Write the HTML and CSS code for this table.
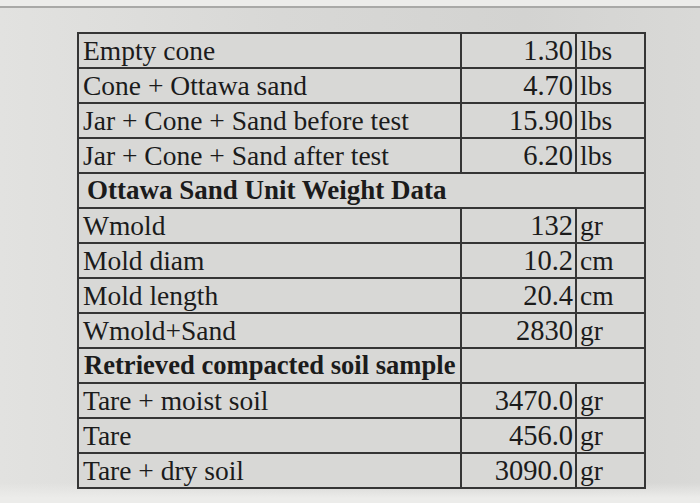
FILE: index.html
```html
<!DOCTYPE html>
<html>
<head>
<meta charset="utf-8">
<link rel="stylesheet" href="styles.css">
</head>
<body>
<div class="screen">
  <div class="topbar"></div>
  <div class="sheet">
    <table class="data">
      <colgroup>
        <col class="c-label">
        <col class="c-num">
        <col class="c-unit">
      </colgroup>
      <tr><td class="label">Empty cone</td><td class="num">1.30</td><td class="unit">lbs</td></tr>
      <tr><td class="label">Cone + Ottawa sand</td><td class="num">4.70</td><td class="unit">lbs</td></tr>
      <tr><td class="label">Jar + Cone + Sand before test</td><td class="num">15.90</td><td class="unit">lbs</td></tr>
      <tr><td class="label">Jar + Cone + Sand after test</td><td class="num">6.20</td><td class="unit">lbs</td></tr>
      <tr><td class="label head" colspan="3">Ottawa Sand Unit Weight Data</td></tr>
      <tr><td class="label">Wmold</td><td class="num">132</td><td class="unit">gr</td></tr>
      <tr><td class="label">Mold diam</td><td class="num">10.2</td><td class="unit">cm</td></tr>
      <tr><td class="label">Mold length</td><td class="num">20.4</td><td class="unit">cm</td></tr>
      <tr><td class="label">Wmold+Sand</td><td class="num">2830</td><td class="unit">gr</td></tr>
      <tr><td class="label head tight">Retrieved compacted soil sample</td><td colspan="2"></td></tr>
      <tr><td class="label">Tare + moist soil</td><td class="num">3470.0</td><td class="unit">gr</td></tr>
      <tr><td class="label">Tare</td><td class="num">456.0</td><td class="unit">gr</td></tr>
      <tr><td class="label">Tare + dry soil</td><td class="num">3090.0</td><td class="unit">gr</td></tr>
    </table>
  </div>
</div>
</body>
</html>
```

FILE: styles.css
```css
html, body {
  margin: 0;
  padding: 0;
}
body {
  width: 700px;
  height: 503px;
  overflow: hidden;
  background:
    linear-gradient(180deg, rgba(236,236,234,0) 0%, rgba(236,236,234,0) 96%, rgba(236,236,234,1) 99%),
    linear-gradient(90deg, #e2e2e0 0%, #d8d8d6 40%, #d3d3d1 75%, #d9d9d7 100%);
  font-family: "Liberation Serif", "Times New Roman", serif;
  color: #1b1b1b;
}
.screen {
  display: flex;
  flex-direction: column;
  height: 503px;
}
.topbar {
  height: 6px;
  background: #ececea;
  border-bottom: 2px solid #a9a9a7;
}
.sheet {
  padding: 24px 0 0 77px;
}
.data {
  border-collapse: collapse;
  table-layout: fixed;
  width: 567px;
  background: #d8d8d6;
  border: 2px solid #2e2e2e;
}
.c-label { width: 383px; }
.c-num { width: 115px; }
.c-unit { width: 69px; }
.data td {
  height: 33px;
  padding: 0;
  border: 2px solid #353535;
  font-size: 27.5px;
  line-height: 33px;
  white-space: nowrap;
  overflow: visible;
  vertical-align: bottom;
}
.label {
  padding-left: 4px !important;
}
.head {
  font-weight: bold;
  font-size: 27px !important;
  padding-left: 8px !important;
}
.head.tight {
  padding-left: 5px !important;
  font-size: 26.6px !important;
}
.num {
  text-align: right;
  padding-right: 2px !important;
  font-size: 28.5px !important;
}
.unit {
  padding-left: 3px !important;
}
```
